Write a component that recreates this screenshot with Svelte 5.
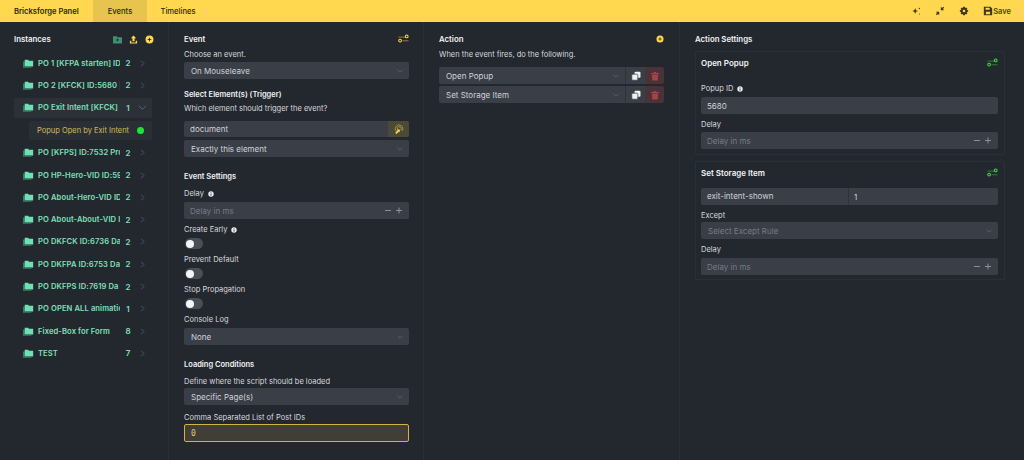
<script>
  const instances = [
    { name: 'PO 1 [KFPA starten] ID', n: 2 },
    { name: 'PO 2 [KFCK] ID:5680 |', n: 2 },
    { name: 'PO Exit Intent [KFCK] |', n: 1, open: true },
    { name: 'PO [KFPS] ID:7532 Pro', n: 2 },
    { name: 'PO HP-Hero-VID ID:59', n: 2 },
    { name: 'PO About-Hero-VID ID', n: 2 },
    { name: 'PO About-About-VID I', n: 2 },
    { name: 'PO DKFCK ID:6736 Da', n: 2 },
    { name: 'PO DKFPA ID:6753 Da', n: 2 },
    { name: 'PO DKFPS ID:7619 Da', n: 2 },
    { name: 'PO OPEN ALL animatio', n: 1 },
    { name: 'Fixed-Box for Form', n: 8 },
    { name: 'TEST', n: 7 }
  ];
</script>

{#snippet chevron()}
  <svg class="chev" viewBox="0 0 10 10"><path d="M2 3.500 5 6.500 8 3.500" /></svg>
{/snippet}
{#snippet info()}
  <svg class="info" viewBox="0 0 10 10"><circle cx="5" cy="5" r="4.500" fill="#eef0f2" /><rect x="4.300" y="4.300" width="1.400" height="3.400" fill="#23272e" /><rect x="4.300" y="2.300" width="1.400" height="1.300" fill="#23272e" /></svg>
{/snippet}
{#snippet sliders(color)}
  <svg class="sliders" viewBox="0 0 12 9" style="color:{color}">
    <path d="M0.500 3H8M5 7H11.500" stroke="currentColor" stroke-width=".7" opacity=".75" fill="none" />
    <circle cx="9.500" cy="2.200" r="1.500" fill="none" stroke="currentColor" stroke-width="1.100" />
    <circle cx="2.300" cy="6.800" r="1.500" fill="none" stroke="currentColor" stroke-width="1.100" />
  </svg>
{/snippet}
{#snippet plusDot()}
  <svg class="plus-dot" viewBox="0 0 10 10"><circle cx="5" cy="5" r="4.400" fill="#ffd84f" /><path d="M5 3V7M3 5H7" stroke="#23272e" stroke-width="1" /></svg>
{/snippet}
{#snippet delay()}
  <div class="field delay">
    <span class="ph">Delay in ms</span>
    <span class="stepper">
      <svg viewBox="0 0 20 8"><path d="M0 4H7M13 4H20M16.500 .5V7.500" stroke="#9a9ea5" stroke-width="1" /></svg>
    </span>
  </div>
{/snippet}
{#snippet select(text, dim)}
  <div class="field select"><span class={dim ? 'ph' : ''}>{text}</span>{@render chevron()}</div>
{/snippet}

<div class="app">
  <header>
    <div class="brand">Bricksforge Panel</div>
    <div class="tab active">Events</div>
    <div class="tab">Timelines</div>
    <div class="tools">
      <svg viewBox="0 0 12 12"><path d="M5 2.500 6 5 8.500 6 6 7 5 9.500 4 7 1.500 6 4 5Z" /><circle cx="10" cy="3" r=".8" /><circle cx="10" cy="9.500" r=".6" /></svg>
      <svg viewBox="0 0 12 12"><path d="M7 1V5H11L9.500 3.500 11 2 10 1 8.500 2.500ZM5 11V7H1L2.500 8.500 1 10 2 11 3.500 9.500Z" /></svg>
      <svg viewBox="0 0 12 12"><path fill-rule="evenodd" d="M5 1H7L7.400 2.500 8.800 1.900 10.100 3.400 9.200 4.700 11 5.200V6.800L9.200 7.300 10.100 8.600 8.800 10.100 7.400 9.500 7 11H5L4.600 9.500 3.200 10.100 1.900 8.600 2.800 7.300 1 6.800V5.200L2.800 4.700 1.900 3.400 3.200 1.900 4.600 2.500ZM6 4.400A1.600 1.600 0 1 0 6 7.600 1.600 1.600 0 1 0 6 4.400Z" /></svg>
      <span class="save">
        <svg viewBox="0 0 12 12"><path fill-rule="evenodd" d="M1 1H9L11 3V11H1ZM3 2V4.500H8V2ZM3.500 7V10H8.500V7Z" /></svg>
        Save
      </span>
    </div>
  </header>

  <main>
    <aside>
      <div class="head side-head">
        <h2>Instances</h2>
        <div class="side-icons">
          <svg viewBox="0 0 10 9"><path d="M0 1H4L5 2H10V9H0Z" fill="#3f8f72" /><path d="M5 3.500V6.500M3.500 5H6.500" stroke="#23272e" stroke-width=".9" /></svg>
          <svg viewBox="0 0 10 10"><path d="M5 .5 8 3.500H6.200V7H3.800V3.500H2Z M1 6.500H2.500V8.200H7.500V6.500H9V9.500H1Z" fill="#ffd84f" /></svg>
          {@render plusDot()}
        </div>
      </div>
      <ul>
        {#each instances as item}
          <li class:open={item.open}>
            <svg class="folder" viewBox="0 0 13 10">
              <path d="M0 2.500H2V9H10V10H0Z" fill="#3c7a67" />
              <path d="M2 .5H6L7 1.800H12V8.500H2Z" fill="#6fe0b3" />
            </svg>
            <span class="name">{item.name}</span>
            <span class="count">{item.n}</span>
            <svg class="arrow" viewBox="0 0 10 10">
              {#if item.open}<path d="M1 3 5 7 9 3" />{:else}<path d="M3 1 7 5 3 9" />{/if}
            </svg>
          </li>
          {#if item.open}
            <li class="child">
              <span class="child-name">Popup Open by Exit Intent</span>
              <i class="dot"></i>
            </li>
          {/if}
        {/each}
      </ul>
    </aside>

    <section class="col event">
      <div class="head"><h2>Event</h2>{@render sliders('#ffd84f')}</div>
      <p class="label first">Choose an event.</p>
      {@render select('On Mouseleave')}
      <h3>Select Element(s) (Trigger)</h3>
      <p class="label which">Which element should trigger the event?</p>
      <div class="field doc">
        <span class="doc-text">document</span>
        <span class="picker">
          <svg viewBox="0 0 12 12">
            <path d="M3 9A4.500 4.500 0 1 1 9.500 8.500M5 7.500A2.300 2.300 0 1 1 8 7" fill="none" stroke="#c9a93f" stroke-width=".9" />
            <path d="M1.500 10.500 4.500 7.500 3.500 6.500H7V10L6 9 3 12Z" fill="#ffd84f" />
          </svg>
        </span>
      </div>
      <div class="gap3">{@render select('Exactly this element')}</div>
      <h3 class="settings">Event Settings</h3>
      <p class="label delay-label">Delay {@render info()}</p>
      {@render delay()}
      <p class="label opt">Create Early {@render info()}</p>
      <div class="toggle"><i></i></div>
      <p class="label opt">Prevent Default</p>
      <div class="toggle"><i></i></div>
      <p class="label opt">Stop Propagation</p>
      <div class="toggle"><i></i></div>
      <p class="label opt">Console Log</p>
      {@render select('None')}
      <h3 class="loading">Loading Conditions</h3>
      <p class="label define">Define where the script should be loaded</p>
      {@render select('Specific Page(s)')}
      <p class="label comma">Comma Separated List of Post IDs</p>
      <div class="field focus"><span>0</span></div>
    </section>

    <section class="col action">
      <div class="head"><h2>Action</h2>{@render plusDot()}</div>
      <p class="label first action-sub">When the event fires, do the following.</p>
      {#each ['Open Popup', 'Set Storage Item'] as a}
        <div class="action-row">
          <div class="field select grow">{a}{@render chevron()}</div>
          <span class="square copy">
            <svg viewBox="0 0 10 10"><rect x="3.500" y=".8" width="6" height="6" rx="1" fill="#eef0f2" /><rect x=".8" y="3.200" width="6" height="6" rx="1" fill="#eef0f2" stroke="#3a3f47" stroke-width=".7" /></svg>
          </span>
          <span class="square trash">
            <svg viewBox="0 0 10 10"><path d="M1 2H3.500L4 1H6L6.500 2H9V3H1ZM1.800 3.600H8.200L7.700 9.500H2.300Z" fill="#a5434a" /></svg>
          </span>
        </div>
      {/each}
    </section>

    <section class="col settings-col">
      <h2 class="as-title">Action Settings</h2>
      <div class="card one">
        <div class="head card-head"><h4>Open Popup</h4>{@render sliders('#3fdc4a')}</div>
        <p class="label popup-label">Popup ID {@render info()}</p>
        <div class="field"><span>5680</span></div>
        <p class="label card-label tight">Delay</p>
        {@render delay()}
      </div>
      <div class="card two">
        <div class="head card-head"><h4>Set Storage Item</h4>{@render sliders('#3fdc4a')}</div>
        <div class="field storage"><span class="key">exit-intent-shown</span><span class="val">1</span></div>
        <p class="label card-label except">Except</p>
        {@render select('Select Except Rule', true)}
        <p class="label card-label">Delay</p>
        {@render delay()}
      </div>
    </section>
  </main>
</div>

<style>
  :global(body) { margin: 0; background: #23272e; }
  .app {
    width: 1024px; height: 460px; overflow: hidden; display: flex; flex-direction: column;
    background: #23272e; color: #e6e8eb;
    font-family: Inter, "Liberation Sans", sans-serif; font-size: 8px;
  }
  header { height: 22px; flex: none; display: flex; align-items: center; background: #ffd84f; color: #2a2718; }
  .brand { width: 93px; padding-left: 14px; box-sizing: border-box; font-weight: 600; font-size: 7.6px; }
  .tab { height: 100%; width: 54px; display: flex; align-items: center; justify-content: center; font-weight: 500; font-size: 7.6px; }
  .tab.active { background: #e7c44e; }
  .tab + .tab { width: 62px; }
  .tools { margin-left: auto; display: flex; align-items: center; gap: 14px; padding-right: 13px; }
  .tools svg { width: 10px; height: 10px; fill: #3f3714; }
  .save { display: flex; align-items: center; gap: 0; font-weight: 600; font-size: 7.500px; color: #4a4220; }
  main { flex: 1; display: flex; min-height: 0; }
  aside { width: 169px; flex: none; border-right: 1px solid #2b2f36; padding: 0 16px 0 14px; box-sizing: border-box; }
  .head { display: flex; justify-content: space-between; align-items: center; }
  h2 { margin: 0; font-size: 7.8px; line-height: 12px; font-weight: 600; color: #f2f3f5; }
  .side-head { padding-top: 11px; height: 12px; }
  .side-icons { display: flex; gap: 7px; align-items: center; margin-right: -2px; }
  .side-icons svg { width: 9px; height: 9px; }
  ul { list-style: none; margin: 7px 0 0; padding: 0; }
  li { height: 22.3px; display: flex; align-items: center; padding-left: 9px; box-sizing: border-box; border-radius: 2px; color: #7fe0b8; }
  li.open { background: #2c3138; height: 20px; margin: 1px 0; }
  .folder { width: 11px; height: 9px; flex: none; margin-right: 4px; }
  .name { width: 82px; flex: none; overflow: hidden; white-space: nowrap; font-weight: 600; font-size: 7.6px; letter-spacing: .1px; }
  .count { width: 14px; flex: none; text-align: center; font-weight: 600; font-size: 8px; margin-left: 1px; }
  .arrow { width: 7px; height: 7px; margin-left: 3.500px; fill: none; stroke: #5e6570; stroke-width: 1.100; flex: none; }
  li.open .arrow { width: 9px; height: 9px; margin-left: 2.500px; }
  li.child { margin: 3px 0 2px 15px; height: 19px; background: #2a2e35; padding: 0 8px; justify-content: space-between; }
  .child-name { color: #d4bc63; font-size: 7.500px; white-space: nowrap; }
  .dot { width: 7px; height: 7px; background: #1fe23a; border-radius: 50%; }
  .col { box-sizing: border-box; border-right: 1px solid #2b2f36; padding-top: 11px; }
  .event { width: 255px; flex: none; padding-left: 15px; padding-right: 14px; }
  .action { width: 256px; flex: none; padding-left: 15px; padding-right: 15px; }
  .settings-col { flex: 1; border-right: 0; padding-left: 15px; padding-right: 19px; }
  .label { margin: 0; font-size: 7.500px; line-height: 10px; color: #d8dade; display: flex; align-items: center; gap: 4px; white-space: nowrap; }
  .first { margin-top: 5px; margin-bottom: 2px; }
  h3 { margin: 10px 0 0; font-size: 7.500px; line-height: 12px; font-weight: 600; color: #f2f3f5; }
  .which { margin-top: 3px; margin-bottom: 7px; }
  .field {
    height: 17px; box-sizing: border-box; background: #393e47; border-radius: 2px; display: flex; align-items: center;
    padding: 0 6px; font-size: 8px; color: #d0d3d8;
  }
  .select { justify-content: space-between; padding-left: 7px; padding-right: 5px; }
  .ph { color: #777c85; }
  .chev { width: 8px; height: 8px; fill: none; stroke: #6f747d; stroke-width: .8; flex: none; }
  .doc { padding-right: 0; justify-content: space-between; height: 16px; }
  .picker { width: 21px; height: 100%; background: #4b4a38; display: flex; align-items: center; justify-content: center; border-radius: 0 2px 2px 0; }
  .picker svg { width: 10px; height: 10px; }
  .gap3 { margin-top: 3px; }
  .settings { margin-top: 14px; }
  .delay-label { margin-top: 6px; margin-bottom: 3px; }
  .info { width: 6px; height: 6px; flex: none; }
  .delay { justify-content: space-between; }
  .stepper { display: flex; align-items: center; }
  .stepper svg { width: 17px; height: 7px; display: block; margin-right: 1px; }
  .opt { margin-top: 6px; margin-bottom: 3px; }
  .toggle { width: 18px; height: 11px; border-radius: 6px; background: #4a4e56; position: relative; margin-left: 1px; margin-bottom: 6px; }
  .toggle i { position: absolute; left: 1px; top: 1.500px; width: 8px; height: 8px; border-radius: 50%; background: #f5f6f7; }
  .loading { margin-top: 14px; }
  .define { margin-top: 6px; margin-bottom: 1px; }
  .comma { margin-top: 8px; margin-bottom: 1px; }
  .focus { background: #403e35; border: 1px solid #d4b33f; color: #e0cd72; font-family: "DejaVu Sans Mono", monospace; font-size: 8px; height: 18px; }
  .action-sub { margin-bottom: 7px; }
  .action-row { display: flex; height: 17px; margin-bottom: 2px; }
  .grow { flex: 1; border-radius: 2px 0 0 2px; }
  .square { width: 19px; display: flex; align-items: center; justify-content: center; }
  .square svg { width: 10px; height: 10px; }
  .copy { background: #393e47; border-left: 1px solid #2e3239; }
  .trash { background: #4a3238; border-radius: 0 2px 2px 0; }
  .as-title { margin-bottom: 6px; }
  .card { border: 1px solid #2b2f36; padding: 0 6px 9px 5px; box-sizing: border-box; margin-bottom: 6px; border-radius: 2px; }
  .card.one { height: 104px; }
  .card.two { height: 119px; }
  .card-head { height: 22px; }
  h4 { margin: 0; font-size: 8px; font-weight: 600; color: #f2f3f5; }
  .popup-label { margin-top: 10px; margin-bottom: 3px; }
  .card-label { margin-top: 6px; margin-bottom: 3px; }
  .tight { margin-bottom: 2px; }
  .storage { padding: 0; margin-top: 4px; }
  .except { margin-top: 6px; margin-bottom: 1px; }
  .key { width: 148px; padding-left: 6px; box-sizing: border-box; border-right: 1px solid #2e3239; line-height: 17px; }
  .val { padding-left: 5px; }
  .sliders { width: 11px; height: 9px; flex: none; position: relative; top: -1px; }
  .plus-dot { width: 8px; height: 8px; flex: none; }
</style>
